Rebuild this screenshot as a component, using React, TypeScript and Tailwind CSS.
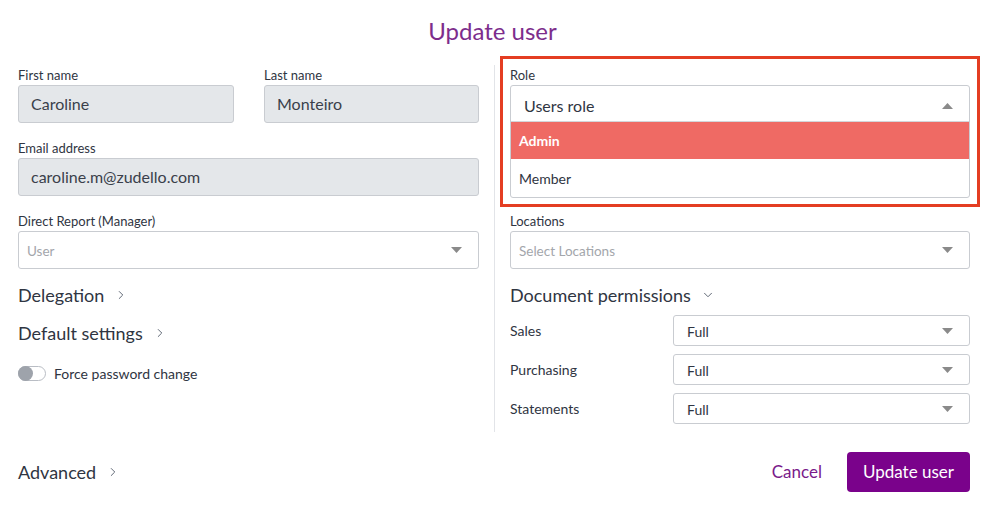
import { ChevronRight, ChevronDown } from "lucide-react";

function Caret({ up = false }: { up?: boolean }) {
    return (
        <svg width="11" height="6" viewBox="0 0 11 6" className="shrink-0">
            {up ? <path d="M0 6 L5.5 0 L11 6 Z" fill="#8a8a8a" /> : <path d="M0 0 L5.5 6 L11 0 Z" fill="#8a8a8a" />}
        </svg>
    );
}

function Label({ children }: { children: React.ReactNode }) {
    return <div className="text-[13px] leading-4 text-[#2f3542] mb-[2px]">{children}</div>;
}

function ReadOnlyInput({ value }: { value: string }) {
    return (
        <div className="h-[38px] rounded-[3px] border border-[#c9ccd1] bg-[#e4e7ea] pl-[12px] flex items-center text-[16px] text-[#3a3f4a]">
            {value}
        </div>
    );
}

function Select({ placeholder, value, h = "h-[38px]" }: { placeholder?: string; value?: string; h?: string }) {
    return (
        <div className={`${h} rounded-[3px] border border-[#c9ccd1] bg-white flex items-center justify-between pl-[8px] pr-[16px]`}>
            {value ? (
                <span className="text-[14px] text-[#2f3542] pl-[5px] pt-[2px]">{value}</span>
            ) : (
                <span className="text-[13.5px] text-[#a3a6ab] pt-[3px]">{placeholder}</span>
            )}
            <Caret />
        </div>
    );
}

function Section({ title, open = false }: { title: string; open?: boolean }) {
    return (
        <div className="flex items-center gap-[10px] text-[18px] leading-6 text-[#2f3542]">
            <span>{title}</span>
            {open ? (
                <ChevronDown size={14} strokeWidth={1.5} className="text-[#4b5563]" />
            ) : (
                <ChevronRight size={14} strokeWidth={1.5} className="text-[#4b5563]" />
            )}
        </div>
    );
}

export default function App() {
    const permissions = ["Sales", "Purchasing", "Statements"];
    return (
        <div className="w-[985px] h-[509px] bg-white font-['Lato','Open_Sans',sans-serif] text-[#2f3542] flex flex-col">
            <h1 className="pt-[16px] text-center text-[24px] leading-[30px] text-[#7d2d8c]">Update user</h1>

            <div className="mt-[19px] pl-[18px] pr-[15px] flex">
                {/* left */}
                <div className="w-[461px] pt-[2px]">
                    <div className="flex gap-[30px]">
                        <div className="w-[216px]">
                            <Label>First name</Label>
                            <ReadOnlyInput value="Caroline" />
                        </div>
                        <div className="flex-1">
                            <Label>Last name</Label>
                            <ReadOnlyInput value="Monteiro" />
                        </div>
                    </div>
                    <div className="mt-[17px]">
                        <Label>Email address</Label>
                        <ReadOnlyInput value="caroline.m@zudello.com" />
                    </div>
                    <div className="mt-[17px]">
                        <Label>Direct Report (Manager)</Label>
                        <Select placeholder="User" />
                    </div>
                    <div className="mt-[14px]">
                        <Section title="Delegation" />
                    </div>
                    <div className="mt-[14px]">
                        <Section title="Default settings" />
                    </div>
                    <div className="mt-[18px] flex items-center gap-[8px]">
                        <div className="relative w-[28px] h-[15px] rounded-full border border-[#b9bdc4] bg-white">
                            <div className="absolute -left-px -top-px w-[15px] h-[15px] rounded-full bg-[#9ea3ab]" />
                        </div>
                        <span className="text-[14px] text-[#2f3542]">Force password change</span>
                    </div>
                </div>

                {/* divider */}
                <div className="mx-[15px] w-px h-[367px] bg-[#e2e4e8]" />

                {/* right */}
                <div className="w-[460px] pt-[2px]">
                    <div className="relative">
                        <div className="absolute -left-[10px] -right-[10px] -top-[11px] -bottom-[9px] border-[3px] border-[#e43d22] pointer-events-none" />
                        <Label>Role</Label>
                        <div className="rounded-[3px] border border-[#c9ccd1] bg-white overflow-hidden">
                            <div className="h-[36px] flex items-center justify-between pl-[13px] pr-[16px] pt-[5px] border-b border-[#d3d6da]">
                                <span className="text-[16px] text-[#2f3542]">Users role</span>
                                <Caret up />
                            </div>
                            <div className="h-[37px] flex items-center pl-[8px] bg-[#ef6a64] text-white text-[14px] font-bold">Admin</div>
                            <div className="h-[38px] flex items-center pl-[8px] text-[14px] text-[#2f3542]">Member</div>
                        </div>
                    </div>
                    <div className="mt-[15px]">
                        <Label>Locations</Label>
                        <Select placeholder="Select Locations" />
                    </div>
                    <div className="mt-[14px]">
                        <Section title="Document permissions" open />
                    </div>
                    <div className="mt-[8px] flex flex-col gap-[8px]">
                        {permissions.map((p) => (
                            <div key={p} className="flex items-center">
                                <span className="w-[163px] text-[14px] text-[#2f3542]">{p}</span>
                                <div className="flex-1">
                                    <Select value="Full" h="h-[31px]" />
                                </div>
                            </div>
                        ))}
                    </div>
                </div>
            </div>

            {/* footer */}
            <div className="mt-[20px] pl-[18px] pr-[15px] flex items-center justify-between">
                <Section title="Advanced" />
                <div className="flex items-center gap-[25px]">
                    <button className="text-[17px] text-[#7a1a8a]">Cancel</button>
                    <button className="h-[40px] px-[16px] rounded-[4px] bg-[#7a028b] text-white text-[17px]">Update user</button>
                </div>
            </div>
        </div>
    );
}
